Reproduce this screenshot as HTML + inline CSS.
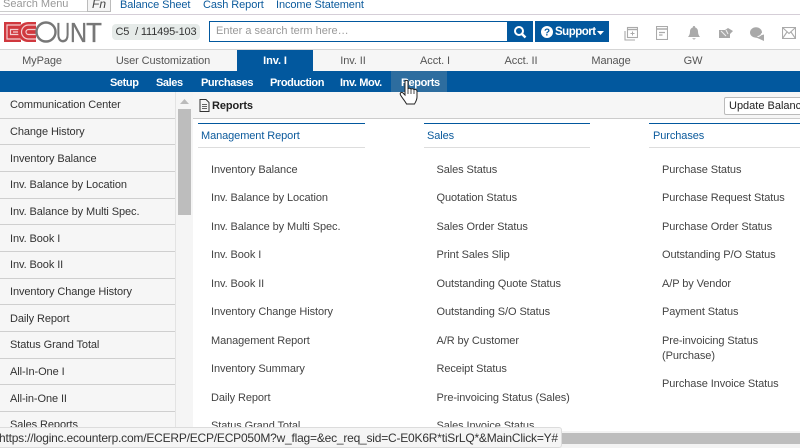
<!DOCTYPE html>
<html><head><meta charset="utf-8"><style>
html,body{margin:0;padding:0}
body{width:800px;height:448px;overflow:hidden;position:relative;background:#fff;font-family:"Liberation Sans",Arial,sans-serif;font-size:11px;color:#333}
.a{position:absolute;white-space:nowrap}
.t{position:absolute;white-space:nowrap;line-height:14px;transform:translateY(-6px);letter-spacing:-.09px}
.tab{color:#555;font-size:11px;transform:translate(-50%,-6px);top:60px}
.sub{color:#fff;font-weight:bold;font-size:11px;top:82px;letter-spacing:-.4px}
.s{left:10px;color:#333}
.i{color:#444}
.ln{position:absolute;height:1px;background:#cfcfcf}
.h{color:#0b5a9c}
</style></head><body>

<!-- top strip -->
<div class="a" style="left:0;top:-5px;height:17px;border:1px solid #ccc;border-left:0;font-size:11px;color:#999;line-height:17px;padding-left:3px;box-sizing:border-box;width:88px">Search Menu</div>
<div class="a" style="left:87px;top:-5px;width:24px;height:17px;border:1px solid #bbb;background:#f4f4f4;font-style:italic;line-height:17px;text-align:center;color:#444;font-size:12px;box-sizing:border-box">Fn</div>
<div class="t h" style="left:120px;top:4px">Balance Sheet</div>
<div class="t h" style="left:203px;top:4px">Cash Report</div>
<div class="t h" style="left:276px;top:4px">Income Statement</div>
<div class="a" style="left:0;top:14px;width:800px;height:1px;background:#d5ced7"></div>

<!-- logo -->
<svg class="a" style="left:3px;top:20px" width="102" height="24" viewBox="0 0 102 24">
<path d="M1 2H18V22H1Z" fill="#d0383e"/>
<path d="M18 5H4V19H18M18 9.500H7.500V14.500H18M18 12H10" fill="none" stroke="#f3cdd0" stroke-width="1.200"/>
<path d="M33 2H25A10 10 0 0 0 25 22H33Z" fill="#d0383e"/>
<path d="M33 5H25.500A7 7 0 0 0 25.500 19H33M33 9.500H25.500A2.500 2.500 0 0 0 25.500 14.500H33" fill="none" stroke="#f3cdd0" stroke-width="1.200"/>
<circle cx="43" cy="12" r="9.500" fill="none" stroke="#777" stroke-width="2.400"/>
<g font-family="Liberation Sans" font-size="28" fill="#777" stroke="#777" stroke-width=".3">
<text x="53" y="22" textLength="14" lengthAdjust="spacingAndGlyphs">U</text>
<text x="67" y="22" textLength="17" lengthAdjust="spacingAndGlyphs">N</text>
<text x="83" y="22" textLength="16" lengthAdjust="spacingAndGlyphs">T</text>
</g>
</svg>

<!-- company -->
<div class="a" style="left:112px;top:24px;width:88px;height:16px;background:#e6ebe9;border-radius:4px;font-size:11px;line-height:17px;text-align:center;color:#333;letter-spacing:-.15px">C5&nbsp; / 111495-103</div>

<!-- search -->
<div class="a" style="left:209px;top:21px;width:298px;height:21px;border:1px solid #02589e;box-sizing:border-box;border-right:0;color:#999;font-size:11px;line-height:19px;padding-left:6px">Enter a search term here…</div>
<div class="a" style="left:507px;top:21px;width:26px;height:21px;background:#02589e"></div>
<svg class="a" style="left:513px;top:25px" width="14" height="14" viewBox="0 0 14 14"><circle cx="6" cy="6" r="4" fill="none" stroke="#fff" stroke-width="2"/><path d="M9 9l3.500 3.500" stroke="#fff" stroke-width="2.400"/></svg>
<div class="a" style="left:535px;top:21px;width:74px;height:21px;background:#02589e"></div>
<svg class="a" style="left:541px;top:26px" width="12" height="12" viewBox="0 0 12 12"><circle cx="6" cy="6" r="6" fill="#fff"/><text x="6" y="9.500" font-family="Liberation Sans" font-size="10" font-weight="bold" fill="#02589e" text-anchor="middle">?</text></svg>
<div class="a" style="left:555px;top:25px;color:#fff;font-weight:bold;font-size:11.500px;line-height:14px;letter-spacing:-.5px">Support</div>
<svg class="a" style="left:597px;top:31px" width="8" height="5"><path d="M0 0H7L3.500 4Z" fill="#fff"/></svg>

<!-- right icons -->
<svg class="a" style="left:624px;top:26px" width="14" height="15" viewBox="0 0 14 15" fill="none" stroke="#aaa" stroke-width="1.100"><rect x="3.500" y="1.500" width="10" height="10" fill="#fff"/><path d="M3.500 3.500H13.500" stroke-width="1.400"/><path d="M1 5V14H11"/><path d="M6.500 7.500h4M8.500 5.500v4" stroke-width="1"/></svg>
<svg class="a" style="left:656px;top:26px" width="12" height="14" viewBox="0 0 12 14" fill="none" stroke="#aaa" stroke-width="1.100"><rect x=".5" y=".5" width="11" height="13"/><path d="M.5 3H11.500" stroke-width="1.500"/><path d="M3 6.500H9M3 9H6.500" stroke-width="1.200"/></svg>
<svg class="a" style="left:688px;top:26px" width="12" height="14" viewBox="0 0 12 14"><path d="M6 0C7.200 0 7.200 1 7.200 1.500C9 2 10 3.500 10 5.500C10 8 10.800 9.500 12 11H0C1.200 9.500 2 8 2 5.500C2 3.500 3 2 4.800 1.500C4.800 1 4.800 0 6 0Z" fill="#aaa"/><path d="M4 12.200H8L6 13.800Z" fill="#aaa"/></svg>
<svg class="a" style="left:719px;top:28px" width="14" height="11" viewBox="0 0 14 11"><path d="M0 2H6L9 0L14 3L11 6V10H0Z" fill="#a8a8a8"/><path d="M2 3L7 8M7 2L9 6" stroke="#eee" stroke-width="1.100"/></svg>
<svg class="a" style="left:750px;top:27px" width="14" height="14" viewBox="0 0 14 14"><ellipse cx="6" cy="5.500" rx="6" ry="5.200" fill="#a8a8a8"/><path d="M5 10L14 14V7.500Z" fill="#a8a8a8"/><path d="M7.500 9.500C9.500 9.500 11.500 8 12 6" stroke="#fff" stroke-width="1" fill="none"/></svg>
<svg class="a" style="left:782px;top:27px" width="14" height="12" viewBox="0 0 14 12" fill="#fff" stroke="#aaa" stroke-width="1.100"><rect x=".5" y=".5" width="13" height="11"/><path d="M.5 .5L7 6.500L13.500 .5M.5 11.500L5 5M13.500 11.500L9 5" fill="none"/></svg>

<div class="a" style="left:0;top:49px;width:800px;height:1px;background:#d5d5d5"></div>

<!-- tabs -->
<div class="a" style="left:0;top:50px;width:800px;height:21px;background:#f6f6f6"></div>
<div class="a" style="left:237px;top:50px;width:76px;height:21px;background:#02589e"></div>
<div class="t tab" style="left:42px">MyPage</div>
<div class="t tab" style="left:163px">User Customization</div>
<div class="t tab" style="left:275px;color:#fff;font-weight:bold">Inv. I</div>
<div class="t tab" style="left:353px">Inv. II</div>
<div class="t tab" style="left:435px">Acct. I</div>
<div class="t tab" style="left:521px">Acct. II</div>
<div class="t tab" style="left:611px">Manage</div>
<div class="t tab" style="left:693px">GW</div>

<!-- subnav -->
<div class="a" style="left:0;top:71px;width:800px;height:21px;background:#02589e"></div>
<div class="a" style="left:391px;top:71px;width:56px;height:21px;background:#2d6d9f"></div>
<div class="t sub" style="left:110px">Setup</div>
<div class="t sub" style="left:156px">Sales</div>
<div class="t sub" style="left:201px">Purchases</div>
<div class="t sub" style="left:270px">Production</div>
<div class="t sub" style="left:340px">Inv. Mov.</div>
<div class="t sub" style="left:401px">Reports</div>

<!-- body background -->
<div class="a" style="left:0;top:92px;width:175px;height:356px;background:#f6f6f6"></div>
<div class="a" style="left:175px;top:92px;width:18px;height:356px;background:#f5f5f5;border-left:1px solid #e3e3e3;box-sizing:border-box"></div>
<svg class="a" style="left:180px;top:99px" width="9" height="5"><path d="M0 5L4.500 0L9 5Z" fill="#bbb"/></svg>
<div class="a" style="left:178px;top:109px;width:13px;height:106px;background:#bdbdbd"></div>

<!-- sidebar -->
<div class="t s" style="top:104px">Communication Center</div><div class="ln" style="left:0;top:118px;width:175px"></div>
<div class="t s" style="top:131px">Change History</div><div class="ln" style="left:0;top:144px;width:175px"></div>
<div class="t s" style="top:158px">Inventory Balance</div><div class="ln" style="left:0;top:171px;width:175px"></div>
<div class="t s" style="top:184px">Inv. Balance by Location</div><div class="ln" style="left:0;top:198px;width:175px"></div>
<div class="t s" style="top:211px">Inv. Balance by Multi Spec.</div><div class="ln" style="left:0;top:224px;width:175px"></div>
<div class="t s" style="top:238px">Inv. Book I</div><div class="ln" style="left:0;top:251px;width:175px"></div>
<div class="t s" style="top:264px">Inv. Book II</div><div class="ln" style="left:0;top:278px;width:175px"></div>
<div class="t s" style="top:291px">Inventory Change History</div><div class="ln" style="left:0;top:304px;width:175px"></div>
<div class="t s" style="top:318px">Daily Report</div><div class="ln" style="left:0;top:331px;width:175px"></div>
<div class="t s" style="top:344px">Status Grand Total</div><div class="ln" style="left:0;top:358px;width:175px"></div>
<div class="t s" style="top:371px">All-In-One I</div><div class="ln" style="left:0;top:384px;width:175px"></div>
<div class="t s" style="top:398px">All-in-One II</div><div class="ln" style="left:0;top:411px;width:175px"></div>
<div class="t s" style="top:424px">Sales Reports</div>

<!-- content header -->
<div class="a" style="left:193px;top:92px;width:607px;height:27px;background:#f6f6f6;border-bottom:1px solid #ccc;box-sizing:border-box"></div>
<svg class="a" style="left:199px;top:99px" width="11" height="13" viewBox="0 0 11 13" fill="none" stroke="#333"><path d="M1 .5H7L10 3.500V12.500H1Z"/><path d="M3 5.500H8M3 7.500H8M3 9.500H8" stroke-width=".8"/></svg>
<div class="t" style="left:212px;top:105px;font-weight:bold;color:#222">Reports</div>
<div class="a" style="left:724px;top:97px;width:90px;height:18px;border:1px solid #bbb;border-radius:2px;background:#fff;box-sizing:border-box;line-height:17px;padding-left:4px;color:#222">Update Balance</div>

<!-- columns -->
<div class="a" style="left:198px;top:123px;width:167px;height:1px;background:#02589e"></div>
<div class="ln" style="left:198px;top:147px;width:167px;background:#ddd"></div>
<div class="a" style="left:424px;top:123px;width:166px;height:1px;background:#02589e"></div>
<div class="ln" style="left:424px;top:147px;width:166px;background:#ddd"></div>
<div class="a" style="left:649px;top:123px;width:151px;height:1px;background:#02589e"></div>
<div class="ln" style="left:649px;top:147px;width:151px;background:#ddd"></div>

<div class="t h" style="left:201px;top:135px">Management Report</div>
<div class="t h" style="left:427px;top:135px">Sales</div>
<div class="t h" style="left:653px;top:135px">Purchases</div>

<div class="t i" style="left:211px;top:169px">Inventory Balance</div>
<div class="t i" style="left:211px;top:197px">Inv. Balance by Location</div>
<div class="t i" style="left:211px;top:226px">Inv. Balance by Multi Spec.</div>
<div class="t i" style="left:211px;top:254px">Inv. Book I</div>
<div class="t i" style="left:211px;top:283px">Inv. Book II</div>
<div class="t i" style="left:211px;top:311px">Inventory Change History</div>
<div class="t i" style="left:211px;top:340px">Management Report</div>
<div class="t i" style="left:211px;top:368px">Inventory Summary</div>
<div class="t i" style="left:211px;top:397px">Daily Report</div>
<div class="t i" style="left:211px;top:425px">Status Grand Total</div>

<div class="t i" style="left:436.500px;top:169px">Sales Status</div>
<div class="t i" style="left:436.500px;top:197px">Quotation Status</div>
<div class="t i" style="left:436.500px;top:226px">Sales Order Status</div>
<div class="t i" style="left:436.500px;top:254px">Print Sales Slip</div>
<div class="t i" style="left:436.500px;top:283px">Outstanding Quote Status</div>
<div class="t i" style="left:436.500px;top:311px">Outstanding S/O Status</div>
<div class="t i" style="left:436.500px;top:340px">A/R by Customer</div>
<div class="t i" style="left:436.500px;top:368px">Receipt Status</div>
<div class="t i" style="left:436.500px;top:397px">Pre-invoicing Status (Sales)</div>
<div class="t i" style="left:436.500px;top:425px">Sales Invoice Status</div>

<div class="t i" style="left:662px;top:169px">Purchase Status</div>
<div class="t i" style="left:662px;top:197px">Purchase Request Status</div>
<div class="t i" style="left:662px;top:226px">Purchase Order Status</div>
<div class="t i" style="left:662px;top:254px">Outstanding P/O Status</div>
<div class="t i" style="left:662px;top:283px">A/P by Vendor</div>
<div class="t i" style="left:662px;top:311px">Payment Status</div>
<div class="t i" style="left:662px;top:340px">Pre-invoicing Status</div>
<div class="t i" style="left:662px;top:355px">(Purchase)</div>
<div class="t i" style="left:662px;top:383px">Purchase Invoice Status</div>

<!-- bottom scrollbar -->
<div class="a" style="left:560px;top:431px;width:240px;height:17px;background:#f3f3f3"></div>
<div class="a" style="left:562px;top:433px;width:238px;height:11px;background:#bdbdbd"></div>

<!-- status bubble -->
<div class="a" style="left:-3px;top:427px;width:565px;height:21px;background:#f5f5f5;border:1px solid #dcdcdc;border-radius:3px;box-sizing:border-box;font-size:12px;line-height:21px;color:#333;overflow:hidden;padding-left:1px;letter-spacing:-.21px">https://loginc.ecounterp.com/ECERP/ECP/ECP050M?w_flag=&amp;ec_req_sid=C-E0K6R*tiSrLQ*&amp;MainClick=Y#</div>

<!-- hand cursor -->
<svg class="a" style="left:399px;top:79px" width="20" height="26" viewBox="0 0 20 26"><path d="M6 2.500C6 1 9 1 9 2.500V10C9 9 12 9 12 10.500C12 9.500 15 9.500 15 11C15 10 18 10.500 18 12V18C18 21 16.500 23 15.500 25H7.500C6 22 3.500 19.500 1.500 16C.5 14 2.500 12.500 4 14L6 16Z" fill="#fff" stroke="#222" stroke-width="1"/><path d="M9 10V15M12 10.500V15M15 11V15" stroke="#222" stroke-width=".8"/></svg>
</body></html>
